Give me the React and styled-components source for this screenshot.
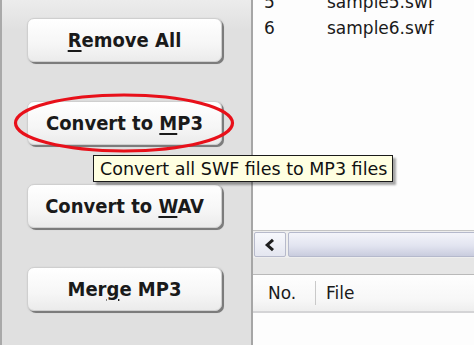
import * as React from 'react';
import styled, { createGlobalStyle } from 'styled-components';

const GlobalStyle = createGlobalStyle`
  html, body {
    margin: 0;
    padding: 0;
    overflow: hidden;
  }
  body {
    font-family: "DejaVu Sans", "Liberation Sans", sans-serif;
  }
`;

const Window = styled.div`
  position: relative;
  width: 474px;
  height: 345px;
  display: flex;
  background: #e2e2e2;
  overflow: hidden;
`;

const Sidebar = styled.div`
  width: 251px;
  flex: none;
  display: flex;
  flex-direction: column;
  gap: 39px;
  padding: 18px 0 0 27px;
  box-sizing: border-box;
  border-left: 2px solid #a9a9a9;
  background: linear-gradient(#ececec, #e0e0e0 30px, #e0e0e0);
`;

const ActionButton = styled.button`
  width: 195px;
  height: 44px;
  margin-left: -2px;
  border: 1px solid #cfcfcf;
  border-radius: 7px;
  background: linear-gradient(#ffffff, #f6f6f6 60%, #ebebeb);
  box-shadow: 2px 2px 0 #7c7c7c, 1px 1px 2px #9a9a9a;
  font-family: "DejaVu Sans Condensed", "DejaVu Sans", "Liberation Sans", sans-serif;
  font-stretch: condensed;
  font-weight: bold;
  font-size: 20px;
  color: #1a1a1a;
  padding: 0;
  cursor: pointer;

  u {
    text-decoration-thickness: 2px;
    text-underline-offset: 3px;
  }
`;

const Content = styled.div`
  flex: 1;
  display: flex;
  flex-direction: column;
  border-left: 2px solid #a6a6a6;
  min-width: 0;
`;

const FileList = styled.div`
  height: 230px;
  flex: none;
  background: #fdfdfd;
  overflow: hidden;
  font-size: 17px;
  color: #1a1a1a;
`;

// list is scrolled down so the row above "6" is half hidden
const ScrollOffset = styled.div`
  margin-top: -11px;
`;

const FileRow = styled.div`
  display: flex;
  height: 26px;
  line-height: 26px;
  padding-left: 11px;
`;

const NumCell = styled.span`
  width: 63px;
  flex: none;
`;

const ScrollBar = styled.div`
  height: 28px;
  flex: none;
  display: flex;
  gap: 2px;
  padding: 1px 0 1px 1px;
  box-sizing: border-box;
  border-top: 1px solid #c4c4c4;
  background: #eeeeee;
`;

const ArrowButton = styled.div`
  width: 30px;
  flex: none;
  display: flex;
  align-items: center;
  justify-content: center;
  border: 1px solid #b7bacb;
  border-radius: 2px;
  background: linear-gradient(#f7f8fc, #e4e6f0);
`;

const Thumb = styled.div`
  flex: 1;
  margin-right: -4px;
  border: 1px solid #b5b9cc;
  border-radius: 2px;
  background: linear-gradient(#f3f4fa, #e2e4f0 55%, #c9ccde);
`;

const Splitter = styled.div`
  height: 16px;
  flex: none;
  background: #e6e6e6;
`;

const ResultList = styled.div`
  flex: 1;
  background: #fdfdfd;
  border-top: 1px solid #b9b9b9;
  font-size: 17px;
  color: #1a1a1a;
`;

const Header = styled.div`
  height: 36px;
  display: flex;
  align-items: center;
  background: linear-gradient(#fefefe, #f7f7f7 70%, #eeeeee);
  border-bottom: 2px solid #d4d4d6;
`;

const HeaderCell = styled.div`
  width: ${p => p.$width || 'auto'};
  padding-left: ${p => p.$pad || 0}px;
  box-sizing: border-box;
  flex: none;
  border-right: ${p => (p.$divider ? '1px solid #c9c9c9' : 'none')};
  height: 24px;
  line-height: 24px;
`;

const Ring = styled.svg`
  position: absolute;
  left: 13px;
  top: 92px;
  pointer-events: none;
`;

const Tooltip = styled.div`
  position: absolute;
  left: 93px;
  top: 155px;
  height: 27px;
  padding: 0 5px 0 6px;
  box-sizing: border-box;
  display: flex;
  align-items: center;
  background: #ffffe1;
  border: 1px solid #1a1a1a;
  box-shadow: 3px 3px 2px rgba(0, 0, 0, 0.35);
  font-size: 17.5px;
  color: #111;
  white-space: nowrap;
`;

const files = [
  { no: 5, name: 'sample5.swf' },
  { no: 6, name: 'sample6.swf' },
];

export default function App() {
  return (
    <>
      <GlobalStyle />
      <Window>
        <Sidebar>
          <ActionButton><u>R</u>emove All</ActionButton>
          <ActionButton>Convert to <u>M</u>P3</ActionButton>
          <ActionButton>Convert to <u>W</u>AV</ActionButton>
          <ActionButton>Mer<u>g</u>e MP3</ActionButton>
        </Sidebar>
        <Content>
          <FileList>
            <ScrollOffset>
              {files.map(f => (
                <FileRow key={f.no}>
                  <NumCell>{f.no}</NumCell>
                  <span>{f.name}</span>
                </FileRow>
              ))}
            </ScrollOffset>
          </FileList>
          <ScrollBar>
            <ArrowButton>
              <svg width="12" height="14" viewBox="0 0 12 14">
                <path d="M9 1.8 L3.2 7 L9 12.2" fill="none" stroke="#1e1e1e" strokeWidth="3" />
              </svg>
            </ArrowButton>
            <Thumb />
          </ScrollBar>
          <Splitter />
          <ResultList>
            <Header>
              <HeaderCell $width="63px" $pad={15} $divider>No.</HeaderCell>
              <HeaderCell $pad={10}>File</HeaderCell>
            </Header>
          </ResultList>
        </Content>
        <Ring width="222" height="62" viewBox="0 0 222 62">
          <ellipse cx="111" cy="31" rx="108.5" ry="28" fill="none" stroke="#e8101a" strokeWidth="3.2" />
        </Ring>
        <Tooltip>Convert all SWF files to MP3 files</Tooltip>
      </Window>
    </>
  );
}
